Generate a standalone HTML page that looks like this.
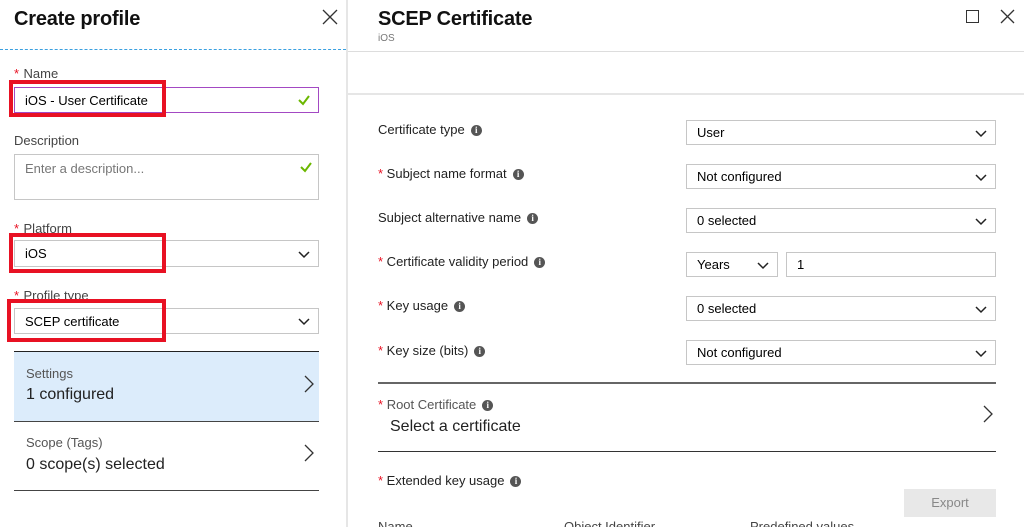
<!DOCTYPE html>
<html><head><meta charset="utf-8"><style>
*{box-sizing:border-box;margin:0;padding:0}
html,body{width:1024px;height:527px;overflow:hidden}
body{background:#fff;font-family:"Liberation Sans",sans-serif;position:relative;color:#000}
.a{position:absolute;white-space:nowrap}
.lbl{font-size:13px;color:#444}
.star{color:#e81123;font-size:13px}
.box{position:absolute;border:1px solid #c6c6c6;background:#fff;font-size:13px;padding-left:10px;display:flex;align-items:center}
.chev{position:absolute;right:8px;top:50%;margin-top:-6px}
.red{position:absolute;border:4px solid #e81123}
.info{display:inline-block;width:11px;height:11px;border-radius:50%;background:#555;color:#fff;font-size:9px;font-weight:bold;text-align:center;line-height:11px;vertical-align:middle;margin-left:6px;font-family:"Liberation Serif",serif}
.rl{position:absolute;font-size:13px;color:#222;white-space:nowrap}
</style></head><body>
<div class="a" style="left:14px;top:8px;font-size:20px;font-weight:bold;color:#111;letter-spacing:-0.2px">Create profile</div>
<svg class="a" style="left:322px;top:9px" width="16" height="16"><path d="M1 1L15 15M15 1L1 15" stroke="#333" stroke-width="1.3"/></svg>
<div class="a" style="left:0;top:49px;width:346px;border-top:1px dashed #3aa0e0"></div>
<div class="a" style="left:346px;top:0;width:2px;height:527px;background:#e6e6e6"></div>

<div class="a" style="left:14px;top:65px"><span class="star">*</span> <span class="lbl">Name</span></div>
<div class="box" style="left:14px;top:87px;width:305px;height:26px;border-color:#a349c3">iOS - User Certificate
<svg class="chev" width="12" height="12"><path d="M1 6L5 10L11 2" stroke="#6bb700" stroke-width="2" fill="none"/></svg></div>
<div class="red" style="left:9px;top:80px;width:157px;height:37px"></div>

<div class="a lbl" style="left:14px;top:133px">Description</div>
<div class="box" style="left:14px;top:154px;width:305px;height:46px;align-items:flex-start;padding-top:6px;color:#777">Enter a description...
<svg style="position:absolute;right:6px;top:6px" width="12" height="12"><path d="M1 6L5 10L11 2" stroke="#6bb700" stroke-width="2" fill="none"/></svg></div>

<div class="a" style="left:14px;top:220px"><span class="star">*</span> <span class="lbl">Platform</span></div>
<div class="box" style="left:14px;top:240px;width:305px;height:27px">iOS
<svg class="chev" width="12" height="12"><path d="M1 4L6 9L11 4" stroke="#222" stroke-width="1.5" fill="none"/></svg></div>
<div class="red" style="left:9px;top:233px;width:157px;height:40px"></div>

<div class="a" style="left:14px;top:287px"><span class="star">*</span> <span class="lbl">Profile type</span></div>
<div class="box" style="left:14px;top:308px;width:305px;height:26px">SCEP certificate
<svg class="chev" width="12" height="12"><path d="M1 4L6 9L11 4" stroke="#222" stroke-width="1.5" fill="none"/></svg></div>
<div class="red" style="left:7px;top:299px;width:159px;height:43px"></div>

<div class="a" style="left:14px;top:351px;width:305px;height:71px;background:#dcecfb;border-top:1px solid #222;border-bottom:1px solid #444"></div>
<div class="a lbl" style="left:26px;top:366px;color:#555">Settings</div>
<div class="a" style="left:26px;top:386px;font-size:16px;color:#222">1 configured</div>
<svg class="a" style="left:304px;top:375px" width="10" height="18"><path d="M1 1L9 9L1 17" stroke="#333" stroke-width="1.3" fill="none"/></svg>
<div class="a lbl" style="left:26px;top:435px;color:#555">Scope (Tags)</div>
<div class="a" style="left:26px;top:456px;font-size:16px;color:#222">0 scope(s) selected</div>
<svg class="a" style="left:304px;top:444px" width="10" height="18"><path d="M1 1L9 9L1 17" stroke="#333" stroke-width="1.3" fill="none"/></svg>
<div class="a" style="left:14px;top:490px;width:305px;border-top:1px solid #444"></div>

<div class="a" style="left:378px;top:8px;font-size:20px;font-weight:bold;color:#111;letter-spacing:-0.2px">SCEP Certificate</div>
<div class="a" style="left:378px;top:33px;font-size:10px;color:#777">iOS</div>
<div class="a" style="left:966px;top:10px;width:13px;height:13px;border:1px solid #333"></div>
<svg class="a" style="left:1000px;top:9px" width="15" height="15"><path d="M1 1L14 14M14 1L1 14" stroke="#333" stroke-width="1.3"/></svg>
<div class="a" style="left:348px;top:51px;width:676px;border-top:1px solid #ddd"></div>
<div class="a" style="left:348px;top:93px;width:676px;border-top:2px solid #e6e6e6"></div>

<div class="rl" style="left:378px;top:122px">Certificate type<span class="info">i</span></div>
<div class="rl" style="left:378px;top:166px"><span class="star">*</span> Subject name format<span class="info">i</span></div>
<div class="rl" style="left:378px;top:210px">Subject alternative name<span class="info">i</span></div>
<div class="rl" style="left:378px;top:254px"><span class="star">*</span> Certificate validity period<span class="info">i</span></div>
<div class="rl" style="left:378px;top:298px"><span class="star">*</span> Key usage<span class="info">i</span></div>
<div class="rl" style="left:378px;top:343px"><span class="star">*</span> Key size (bits)<span class="info">i</span></div>

<div class="box" style="left:686px;top:120px;width:310px;height:25px">User<svg class="chev" width="12" height="12"><path d="M1 4L6 9L11 4" stroke="#222" stroke-width="1.5" fill="none"/></svg></div>
<div class="box" style="left:686px;top:164px;width:310px;height:25px">Not configured<svg class="chev" width="12" height="12"><path d="M1 4L6 9L11 4" stroke="#222" stroke-width="1.5" fill="none"/></svg></div>
<div class="box" style="left:686px;top:208px;width:310px;height:25px">0 selected<svg class="chev" width="12" height="12"><path d="M1 4L6 9L11 4" stroke="#222" stroke-width="1.5" fill="none"/></svg></div>
<div class="box" style="left:686px;top:252px;width:92px;height:25px">Years<svg class="chev" width="12" height="12"><path d="M1 4L6 9L11 4" stroke="#222" stroke-width="1.5" fill="none"/></svg></div>
<div class="box" style="left:786px;top:252px;width:210px;height:25px">1</div>
<div class="box" style="left:686px;top:296px;width:310px;height:25px">0 selected<svg class="chev" width="12" height="12"><path d="M1 4L6 9L11 4" stroke="#222" stroke-width="1.5" fill="none"/></svg></div>
<div class="box" style="left:686px;top:340px;width:310px;height:25px">Not configured<svg class="chev" width="12" height="12"><path d="M1 4L6 9L11 4" stroke="#222" stroke-width="1.5" fill="none"/></svg></div>

<div class="a" style="left:378px;top:382px;width:618px;border-top:2px solid #666"></div>
<div class="rl" style="left:378px;top:397px"><span class="star">*</span> <span style="color:#555">Root Certificate</span><span class="info">i</span></div>
<div class="a" style="left:390px;top:418px;font-size:16px;color:#222">Select a certificate</div>
<svg class="a" style="left:983px;top:405px" width="10" height="18"><path d="M1 1L9 9L1 17" stroke="#333" stroke-width="1.3" fill="none"/></svg>
<div class="a" style="left:378px;top:451px;width:618px;border-top:1px solid #333"></div>
<div class="rl" style="left:378px;top:473px"><span class="star">*</span> Extended key usage<span class="info">i</span></div>
<div class="a" style="left:904px;top:489px;width:92px;height:28px;background:#e8e8e8;color:#888;font-size:13px;text-align:center;line-height:28px">Export</div>
<div class="rl" style="left:378px;top:519px;color:#444">Name</div>
<div class="rl" style="left:564px;top:519px;color:#444">Object Identifier</div>
<div class="rl" style="left:750px;top:519px;color:#444">Predefined values</div>
</body></html>
